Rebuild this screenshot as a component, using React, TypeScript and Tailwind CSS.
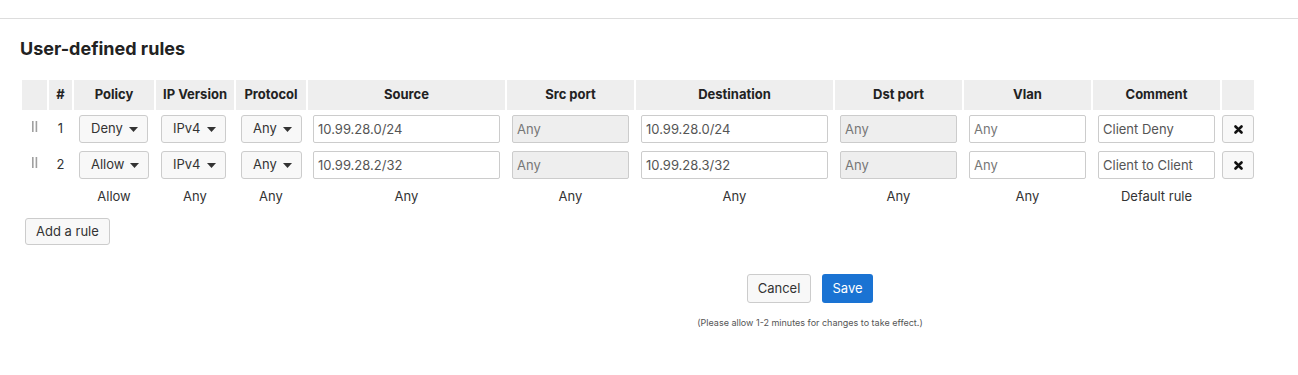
import { useState } from "react";

type Rule = {
  id: number;
  policy: string;
  ipVersion: string;
  protocol: string;
  source: string;
  destination: string;
  vlan: string;
  comment: string;
};

const initialRules: Rule[] = [
  { id: 1, policy: "Deny", ipVersion: "IPv4", protocol: "Any", source: "10.99.28.0/24", destination: "10.99.28.0/24", vlan: "", comment: "Client Deny" },
  { id: 2, policy: "Allow", ipVersion: "IPv4", protocol: "Any", source: "10.99.28.2/32", destination: "10.99.28.3/32", vlan: "", comment: "Client to Client" },
];

const headers = [
  { label: "", w: "w-[25px]" },
  { label: "#", w: "w-[23px]" },
  { label: "Policy", w: "w-[80px]" },
  { label: "IP Version", w: "w-[78px]" },
  { label: "Protocol", w: "w-[70px]" },
  { label: "Source", w: "w-[197px]" },
  { label: "Src port", w: "w-[127px]" },
  { label: "Destination", w: "w-[197px]" },
  { label: "Dst port", w: "w-[127px]" },
  { label: "Vlan", w: "w-[127px]" },
  { label: "Comment", w: "w-[127px]" },
  { label: "", w: "w-[32px]" },
];

const Caret = () => (
  <svg width="9" height="5" viewBox="0 0 9 5" className="ml-[6px] shrink-0">
    <path d="M0 0h9L4.5 5z" fill="#333" />
  </svg>
);

const DropButton = ({ label }: { label: string }) => (
  <button
    type="button"
    className="flex h-[28px] items-center rounded-[3px] border border-[#ccc] bg-[#f8f8f8] pl-[11px] pr-[9px] text-[13px] text-[#333]"
  >
    {label}
    <Caret />
  </button>
);

const DragHandle = () => (
  <svg width="6" height="11" viewBox="0 0 6 11" className="ml-[10px] mt-[-6px]">
    <rect x="0" y="0" width="1.6" height="11" fill="#a0a0a0" />
    <rect x="3.6" y="0" width="1.6" height="11" fill="#a0a0a0" />
  </svg>
);

const inputCls =
  "h-[28px] w-full rounded-[2px] border border-[#ccc] bg-white px-[4px] text-[13px] text-[#555] outline-none placeholder:text-[#777]";
const disabledCls =
  "h-[28px] w-full rounded-[2px] border border-[#ccc] bg-[#eee] px-[4px] text-[13px] text-[#777] outline-none";

export default function App() {
  const [rules, setRules] = useState<Rule[]>(initialRules);

  return (
    <main
      className="min-h-[375px] w-full bg-white text-[#333]"
      style={{ fontFamily: "Inter, 'Noto Sans', sans-serif" }}
    >
      <div className="h-[19px] border-b border-[#ddd]" />
      <section className="px-[20px] pt-[18px]">
        <h2 className="text-[18px] font-bold leading-[24px] text-[#222]">User-defined rules</h2>

        <table className="mt-[17px] w-[1236px] table-fixed border-separate border-spacing-[2px] text-[13px]">
          <thead>
            <tr>
              {headers.map((h, i) => (
                <th
                  key={`h-${i}`}
                  className={`${h.w} h-[30px] bg-[#eee] p-0 text-center text-[13px] font-bold text-[#222]`}
                >
                  {h.label}
                </th>
              ))}
            </tr>
          </thead>
          <tbody>
            {rules.map((r, idx) => (
              <tr key={r.id}>
                <td className="px-0 py-[3px] align-middle">
                  <DragHandle />
                </td>
                <td className="px-0 py-[3px] text-center text-[13px] text-[#333]">{idx + 1}</td>
                <td className="px-[5px] py-[3px]">
                  <DropButton label={r.policy} />
                </td>
                <td className="px-[5px] py-[3px]">
                  <DropButton label={r.ipVersion} />
                </td>
                <td className="px-[5px] py-[3px]">
                  <DropButton label={r.protocol} />
                </td>
                <td className="px-[5px] py-[3px]">
                  <input className={inputCls} defaultValue={r.source} />
                </td>
                <td className="px-[5px] py-[3px]">
                  <input className={disabledCls} defaultValue="Any" disabled />
                </td>
                <td className="px-[5px] py-[3px]">
                  <input className={inputCls} defaultValue={r.destination} />
                </td>
                <td className="px-[5px] py-[3px]">
                  <input className={disabledCls} defaultValue="Any" disabled />
                </td>
                <td className="px-[5px] py-[3px]">
                  <input className={inputCls} placeholder="Any" defaultValue={r.vlan} />
                </td>
                <td className="px-[5px] py-[3px]">
                  <input className={inputCls} defaultValue={r.comment} />
                </td>
                <td className="p-0 py-[3px]">
                  <button
                    type="button"
                    aria-label="Remove rule"
                    onClick={() => setRules((rs) => rs.filter((x) => x.id !== r.id))}
                    className="flex h-[28px] w-[32px] items-center justify-center rounded-[3px] border border-[#ccc] bg-[#f8f8f8]"
                  >
                    <svg width="9" height="9" viewBox="0 0 9 9">
                      <path d="M1.5 1.5l6 6M7.5 1.5l-6 6" stroke="#111" strokeWidth="2.6" strokeLinecap="round" />
                    </svg>
                  </button>
                </td>
              </tr>
            ))}
            <tr className="text-center text-[13px] text-[#333]">
              <td className="h-[26px] p-0" />
              <td className="p-0" />
              <td className="p-0">Allow</td>
              <td className="p-0">Any</td>
              <td className="p-0">Any</td>
              <td className="p-0">Any</td>
              <td className="p-0">Any</td>
              <td className="p-0">Any</td>
              <td className="p-0">Any</td>
              <td className="p-0">Any</td>
              <td className="p-0">Default rule</td>
              <td className="p-0" />
            </tr>
          </tbody>
        </table>

        <button
          type="button"
          className="ml-[5px] mt-[6px] h-[27px] rounded-[3px] border border-[#ccc] bg-[#f8f8f8] px-[10px] text-[13px] text-[#333]"
        >
          Add a rule
        </button>

        <div className="mt-[29px] flex flex-col items-center pl-[322px]">
          <div className="flex gap-[11px]">
            <button
              type="button"
              className="h-[29px] w-[64px] rounded-[3px] border border-[#ccc] bg-[#f8f8f8] text-[13px] text-[#333]"
            >
              Cancel
            </button>
            <button
              type="button"
              className="h-[29px] w-[51px] rounded-[3px] bg-[#1a73d3] text-[13px] text-white"
            >
              Save
            </button>
          </div>
          <p className="mt-[13px] text-[9px] text-[#555]">(Please allow 1-2 minutes for changes to take effect.)</p>
        </div>
      </section>
    </main>
  );
}
